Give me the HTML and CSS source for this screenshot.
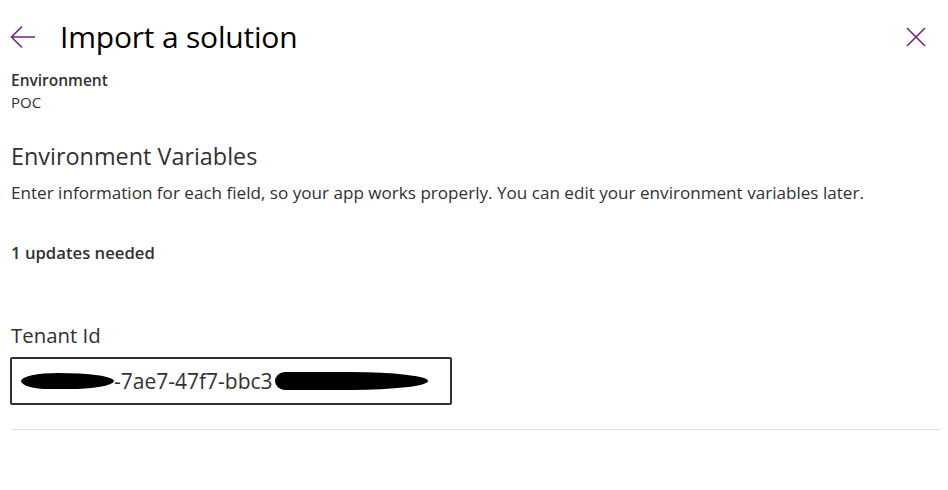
FILE: index.html
```html
<!DOCTYPE html>
<html lang="en">
<head>
    <meta charset="UTF-8">
    <meta name="viewport" content="width=device-width, initial-scale=1.0">
    <title>Import a solution</title>
    <link rel="stylesheet" href="styles.css">
</head>
<body>
    <div class="panel">
        <div class="header">
            <button class="icon-btn back" aria-label="Back">
                <svg width="26" height="24" viewBox="0 0 26 24">
                    <path d="M25 12 H2 M12 1.5 L1.5 12 L12 22.5" stroke="#742774" stroke-width="1.6" fill="none"/>
                </svg>
            </button>
            <h1>Import a solution</h1>
            <button class="icon-btn close" aria-label="Close">
                <svg width="20" height="20" viewBox="0 0 20 20">
                    <path d="M1 1 L19 19 M19 1 L1 19" stroke="#742774" stroke-width="1.6" fill="none"/>
                </svg>
            </button>
        </div>

        <div class="env">
            <div class="label">Environment</div>
            <div class="value">POC</div>
        </div>

        <h2>Environment Variables</h2>
        <p class="desc">Enter information for each field, so your app works properly. You can edit your environment variables later.</p>

        <div class="updates">1 updates needed</div>

        <div class="field">
            <label class="field-label">Tenant Id</label>
            <div class="input">
                <span class="redact r1"></span><span class="input-text">-7ae7-47f7-bbc3</span><span class="redact r2"></span>
            </div>
        </div>

        <div class="divider"></div>
    </div>
</body>
</html>
```

FILE: styles.css
```css
body {
    margin: 0;
    background: #fff;
    font-family: "Open Sans", "Noto Sans", sans-serif;
    color: #323130;
}
.panel {
    padding: 0 8px 0 11px;
}
.header {
    display: flex;
    align-items: center;
    height: 74px;
}
.icon-btn {
    background: none;
    border: none;
    padding: 0;
    display: flex;
    cursor: pointer;
}
.back {
    margin-left: -1px;
    margin-right: 24px;
}
h1 {
    font-size: 30px;
    font-weight: 400;
    color: #000;
    margin: 0 0 2px;
    flex: 1;
    letter-spacing: -0.2px;
}
.close {
    margin-right: 14px;
}
.env {
    margin-top: -5px;
}
.label {
    font-size: 15.5px;
    font-weight: 600;
    line-height: 22px;
}
.value {
    font-size: 15px;
    line-height: 22px;
}
h2 {
    font-size: 23.4px;
    font-weight: 400;
    margin: 28px 0 0;
    line-height: 30px;
}
.desc {
    font-size: 17.1px;
    margin: 10px 0 0;
    line-height: 24px;
}
.updates {
    font-size: 16.7px;
    font-weight: 600;
    margin-top: 36px;
    line-height: 24px;
}
.field {
    margin-top: 56px;
}
.field-label {
    display: block;
    font-size: 20.4px;
    line-height: 28px;
    margin-bottom: 8px;
}
.input {
    width: 429px;
    height: 44px;
    border: 2px solid #323130;
    border-radius: 2px;
    margin-left: -1px;
    display: flex;
    align-items: center;
    padding-left: 9px;
}
.input-text {
    font-size: 21px;
    color: #323130;
}
.redact {
    display: inline-block;
    background: #000;
    height: 16px;
}
.r1 {
    width: 93px;
    border-radius: 40% 60% 50% 30% / 50%;
}
.r2 {
    width: 153px;
    height: 18px;
    margin-left: 2px;
    border-radius: 10px 50% 50% 10px / 50%;
}
.divider {
    margin-top: 24px;
    height: 1px;
    background: #e1dfdd;
}
```
